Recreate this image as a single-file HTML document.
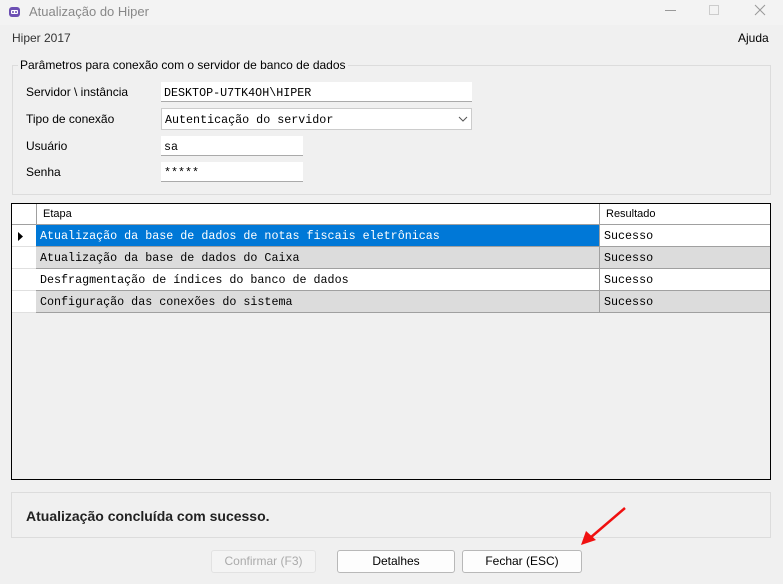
<!DOCTYPE html>
<html><head><meta charset="utf-8"><style>
*{margin:0;padding:0;box-sizing:border-box}
body{width:783px;height:584px;background:#f0f0f0;font-family:"Liberation Sans",sans-serif;font-size:12px;color:#000;position:relative;overflow:hidden}
.a{position:absolute}
.mono{font-family:"Liberation Mono",monospace;font-size:11.7px}
.inp{position:absolute;background:#fff;border-bottom:1px solid #aaa;padding:4px 0 0 3px;font-family:"Liberation Mono",monospace;font-size:11.7px}
.btn{position:absolute;top:550px;height:23px;border:1px solid #b8b8b8;border-radius:3px;background:#fdfdfd;text-align:center;line-height:21px;font-size:12px}
.row{position:absolute;left:36px;width:734px;height:22px;border-bottom:1px solid #a0a0a0}
.row span{position:absolute;top:4px}
</style></head><body>
<div class="a" style="left:0;top:0;width:783px;height:25px;background:#f3f3f3"></div>
<svg class="a" style="left:8px;top:5px" width="13" height="13" viewBox="0 0 13 13"><rect x="1" y="2" width="11" height="10" rx="3" fill="#6c4fb3"/><rect x="3" y="5" width="7" height="4" rx="1" fill="#fff"/><circle cx="5" cy="7" r="1" fill="#6c4fb3"/><circle cx="8" cy="7" r="1" fill="#6c4fb3"/></svg>
<div class="a" style="left:29px;top:4px;font-size:13px;color:#888">Atualização do Hiper</div>
<div class="a" style="left:665px;top:10px;width:11px;height:1px;background:#999"></div>
<div class="a" style="left:709px;top:5px;width:10px;height:10px;border:1px solid #ccc"></div>
<svg class="a" style="left:754px;top:4px" width="12" height="12"><path d="M1 1L11 11M11 1L1 11" stroke="#999" stroke-width="1"/></svg>
<div class="a" style="left:12px;top:31px;color:#333">Hiper 2017</div>
<div class="a" style="left:738px;top:31px">Ajuda</div>
<div class="a" style="left:12px;top:65px;width:759px;height:130px;border:1px solid #dcdcdc"></div>
<div class="a" style="left:18px;top:58px;background:#f0f0f0;padding:0 2px">Parâmetros para conexão com o servidor de banco de dados</div>
<div class="a" style="left:26px;top:85px">Servidor \ instância</div>
<div class="a" style="left:26px;top:112px">Tipo de conexão</div>
<div class="a" style="left:26px;top:139px">Usuário</div>
<div class="a" style="left:26px;top:165px">Senha</div>
<div class="inp" style="left:161px;top:82px;width:311px;height:20px">DESKTOP-U7TK4OH\HIPER</div>
<div class="inp" style="left:161px;top:108px;width:311px;height:22px;border:1px solid #ccc;padding-top:4px">Autenticação do servidor</div>
<svg class="a" style="left:458px;top:116px" width="10" height="6"><path d="M1 1L5 5L9 1" stroke="#555" fill="none"/></svg>
<div class="inp" style="left:161px;top:136px;width:142px;height:20px">sa</div>
<div class="inp" style="left:161px;top:162px;width:142px;height:20px">*****</div>
<div class="a" style="left:11px;top:203px;width:760px;height:277px;border:1px solid #000;background:#f0f0f0"></div>
<div class="a" style="left:12px;top:204px;width:758px;height:21px;background:#fff;border-bottom:1px solid #a0a0a0"></div>
<div class="a" style="left:36px;top:204px;width:1px;height:109px;background:#a0a0a0"></div>
<div class="a" style="left:12px;top:225px;width:24px;height:88px;background:#fff"></div>
<div class="a" style="left:12px;top:246px;width:24px;height:1px;background:#e0e0e0"></div>
<div class="a" style="left:12px;top:268px;width:24px;height:1px;background:#e0e0e0"></div>
<div class="a" style="left:12px;top:290px;width:24px;height:1px;background:#e0e0e0"></div>
<div class="a" style="left:12px;top:312px;width:24px;height:1px;background:#e0e0e0"></div>
<div class="a" style="left:43px;top:208px;font-size:11px">Etapa</div>
<div class="a" style="left:606px;top:208px;font-size:11px">Resultado</div>
<svg class="a" style="left:18px;top:232px" width="5" height="9"><path d="M0 0L5 4.5L0 9Z" fill="#000"/></svg>
<div class="row mono" style="top:225px;background:#fff"><div class="a" style="left:0;top:0;width:563px;height:21px;background:#0078d7"></div><span style="left:4px;color:#fff">Atualização da base de dados de notas fiscais eletrônicas</span><span style="left:568px">Sucesso</span></div>
<div class="row mono" style="top:247px;background:#dcdcdc"><span style="left:4px">Atualização da base de dados do Caixa</span><span style="left:568px">Sucesso</span></div>
<div class="row mono" style="top:269px;background:#fff"><span style="left:4px">Desfragmentação de índices do banco de dados</span><span style="left:568px">Sucesso</span></div>
<div class="row mono" style="top:291px;background:#dcdcdc"><span style="left:4px">Configuração das conexões do sistema</span><span style="left:568px">Sucesso</span></div>
<div class="a" style="left:599px;top:204px;width:1px;height:109px;background:#a0a0a0"></div>
<div class="a" style="left:11px;top:492px;width:760px;height:46px;border:1px solid #dcdcdc"></div>
<div class="a" style="left:26px;top:508px;font-size:14px;font-weight:bold;color:#222">Atualização concluída com sucesso.</div>
<div class="btn" style="left:211px;width:105px;color:#aaa;border-color:#e2e2e2;background:#f4f4f4">Confirmar (F3)</div>
<div class="btn" style="left:337px;width:118px">Detalhes</div>
<div class="btn" style="left:462px;width:120px">Fechar (ESC)</div>
<svg class="a" style="left:578px;top:505px" width="50" height="42"><path d="M47 3L12 33" stroke="#f01010" stroke-width="2.5"/><path d="M3 40L8 26L18 35Z" fill="#f01010"/></svg>
</body></html>
